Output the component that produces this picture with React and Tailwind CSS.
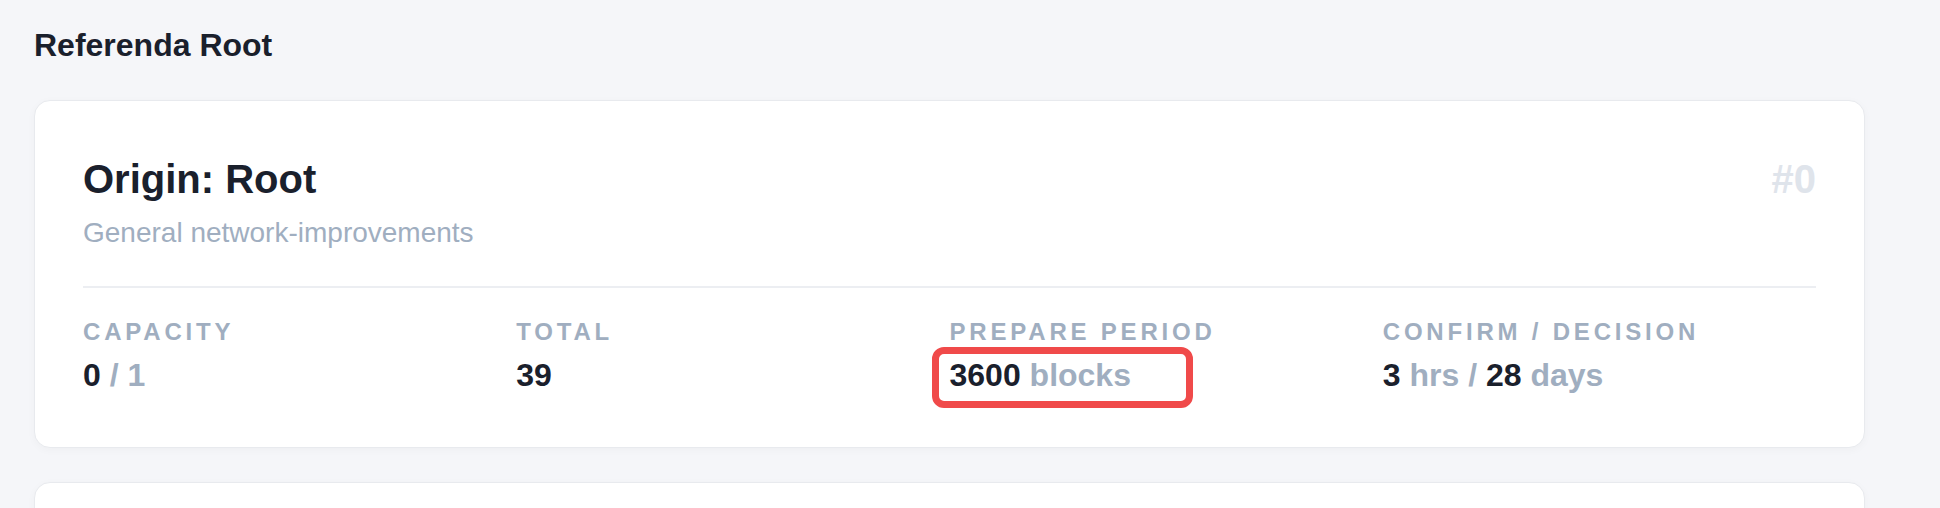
import React from 'react'

const stats = [
  { label: "Capacity", parts: [["0", true], [" / 1", false]] },
  { label: "Total", parts: [["39", true]] },
  { label: "Prepare Period", parts: [["3600", true], [" blocks", false]], highlight: true },
  { label: "Confirm / Decision", parts: [["3", true], [" hrs / ", false], ["28", true], [" days", false]] },
]

function Stat({ stat }) {
  return (
    <div>
      <div className="text-[24px] leading-[36px] font-bold uppercase tracking-[3.8px] text-[#a0aec0]">
        {stat.label}
      </div>
      <div className="relative mt-[1px] text-[32px] leading-[48px] font-bold">
        {stat.parts.map(([text, strong], i) => (
          <span key={i} className={strong ? "text-[#1a202c]" : "text-[#a0aec0]"}>
            {text}
          </span>
        ))}
        {/* highlight annotation */}
        {stat.highlight && (
          <div className="absolute -left-[18px] -top-[4px] w-[261px] h-[61px] rounded-[12px] border-[7px] border-[#f04a4a]"></div>
        )}
      </div>
    </div>
  )
}

export default function App() {
  return (
    <div
      className="min-h-[508px] bg-[#f5f6f9] pl-[34px] pr-[75px] pt-[21px]"
      style={{ fontFamily: '"Liberation Sans", Arial, sans-serif' }}
    >
      <h1 className="text-[32px] leading-[48px] font-bold text-[#1a202c]">Referenda Root</h1>

      <div className="mt-[31px] bg-white border border-[#e8eaee] rounded-[16px] shadow-[0_2px_8px_rgba(0,0,0,0.03)] p-[48px]">
        <div className="flex items-start justify-between">
          <div>
            <h2 className="text-[40px] leading-[60px] font-bold text-[#1a202c]">Origin: Root</h2>
            <p className="mt-[3px] text-[28px] leading-[42px] text-[#a0aec0]">General network-improvements</p>
          </div>
          <div className="text-[40px] leading-[60px] font-bold text-[#dfe4eb]">#0</div>
        </div>

        <div className="mt-[32px] border-t-2 border-[#eceef2]"></div>

        <div className="grid grid-cols-4 pt-[26px]">
          {stats.map((s) => (
            <Stat key={s.label} stat={s} />
          ))}
        </div>
      </div>

      <div className="mt-[34px] h-[200px] bg-white border border-[#e8eaee] rounded-[16px] shadow-[0_2px_8px_rgba(0,0,0,0.03)]"></div>
    </div>
  )
}
